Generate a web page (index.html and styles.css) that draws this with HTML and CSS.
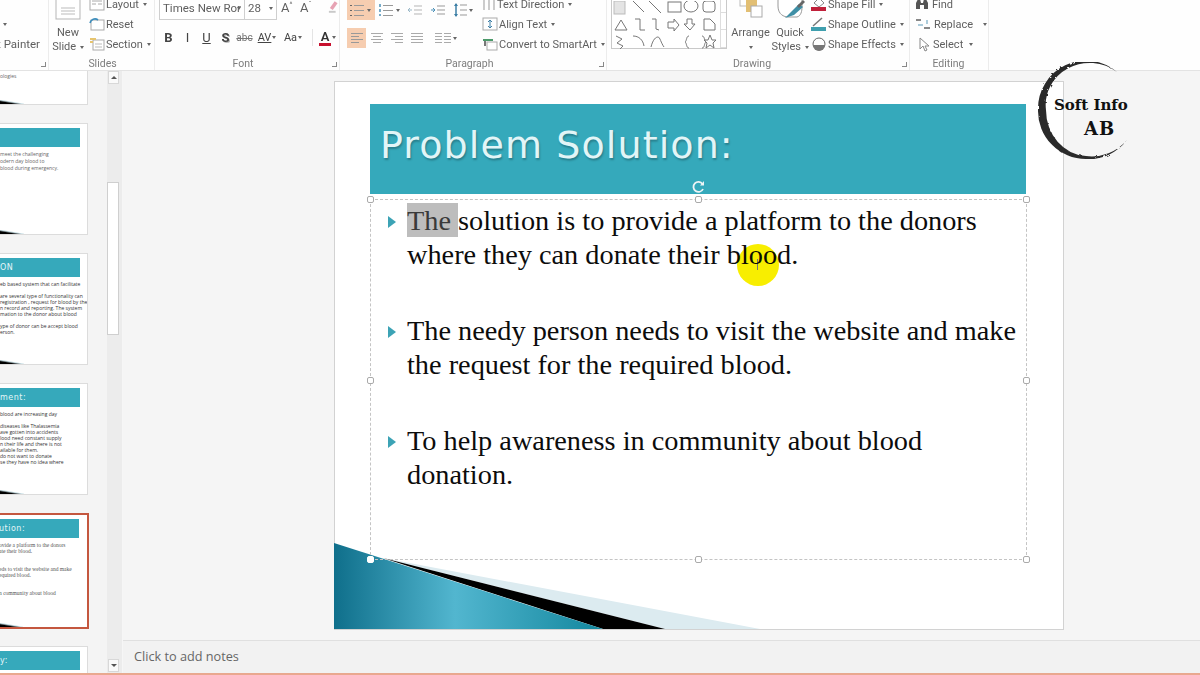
FILE: index.html
```html
<!DOCTYPE html>
<html lang="en">
<head>
    <meta charset="UTF-8">
    <title>Problem Solution - PowerPoint</title>
    <link rel="stylesheet" href="styles.css">
</head>
<body>
<!-- Ribbon -->
<header class="ribbon">
    <section class="group group-clipboard">
        <div class="group-body rows">
            <div class="row"></div>
            <div class="row"><span class="caret"></span></div>
            <div class="row painter">t Painter</div>
        </div>
        <div class="group-label"></div>
        <span class="expander"></span>
    </section>

    <section class="group group-slides">
        <div class="group-body slides-body">
            <div class="big-btn new-slide">
                <svg class="big-icon" width="26" height="26" viewBox="0 0 26 26"><rect x="1" y="1" width="24" height="24" fill="#fff" stroke="#b5b5b5"/><path d="M6 14h14M6 17h14M6 20h14" stroke="#bbb"/></svg>
                <span>New</span>
                <span>Slide <i class="caret"></i></span>
            </div>
            <div class="rows">
                <div class="row"><svg width="16" height="14" viewBox="0 0 16 14"><rect x="1" y="1" width="14" height="12" fill="#fff" stroke="#aaa"/><path d="M3 4h10M3 7h4M9 7h4" stroke="#aaa"/></svg>Layout <i class="caret"></i></div>
                <div class="row"><svg width="16" height="14" viewBox="0 0 16 14"><rect x="2" y="3" width="13" height="10" fill="#fff" stroke="#aaa"/><path d="M1 6a5 5 0 0 1 8-3" fill="none" stroke="#3c8dbc" stroke-width="1.6"/></svg>Reset</div>
                <div class="row"><svg width="16" height="14" viewBox="0 0 16 14"><rect x="4" y="3" width="11" height="10" fill="#fff" stroke="#aaa"/><path d="M1 2h6M1 5h3" stroke="#e6c46e" stroke-width="2"/><path d="M6 7h7M6 10h7" stroke="#bbb"/></svg>Section <i class="caret"></i></div>
            </div>
        </div>
        <div class="group-label">Slides</div>
    </section>

    <section class="group group-font">
        <div class="group-body font-body">
            <div class="font-top">
                <div class="combo combo-name">Times New Ror<i class="caret"></i></div>
                <div class="combo combo-size">28<i class="caret"></i></div>
                <span class="grow-btn">A<sup>^</sup></span>
                <span class="grow-btn">A<sup>ˇ</sup></span>
                <svg class="clear-btn" width="14" height="16" viewBox="0 0 14 16"><path d="M4 9l5-7 3 2-5 7z" fill="#e7a3b4"/><path d="M3 13h7" stroke="#c9c9c9" stroke-width="2"/></svg>
            </div>
            <div class="font-bottom">
                <b class="fmt">B</b>
                <i class="fmt fmt-i">I</i>
                <u class="fmt fmt-u">U</u>
                <span class="fmt fmt-s">S</span>
                <s class="fmt fmt-abc">abc</s>
                <span class="fmt fmt-av"><u>AV</u><i class="caret"></i></span>
                <span class="fmt fmt-aa">Aa<i class="caret"></i></span>
                <span class="fmt fmt-color"><span class="color-a">A</span><i class="caret"></i></span>
            </div>
        </div>
        <div class="group-label">Font</div>
        <span class="expander"></span>
    </section>

    <section class="group group-paragraph">
        <div class="group-body para-body">
            <div class="para-left">
                <div class="para-top">
                    <span class="tool tool-on tool-bullets">
                        <svg width="16" height="14" viewBox="0 0 16 14"><path d="M2 2v1M2 7v1M2 12v1" stroke="#666" stroke-width="2"/><path d="M5 2.500h10M5 7.500h10M5 12.500h10" stroke="#999"/></svg><i class="caret"></i>
                    </span>
                    <span class="tool">
                        <svg width="16" height="14" viewBox="0 0 16 14"><path d="M2 1v3M2 6v3M2 11v2" stroke="#4a90b8" stroke-width="1.500"/><path d="M5 2.500h10M5 7.500h10M5 12.500h10" stroke="#999"/></svg><i class="caret"></i>
                    </span>
                    <span class="tool tool-gap">
                        <svg width="16" height="12" viewBox="0 0 16 12"><path d="M7 2h8M7 6h8M7 10h8" stroke="#b5b5b5"/><path d="M5 6H1M3 4L1 6l2 2" fill="none" stroke="#9ab8c8"/></svg>
                    </span>
                    <span class="tool">
                        <svg width="16" height="12" viewBox="0 0 16 12"><path d="M7 2h8M7 6h8M7 10h8" stroke="#999"/><path d="M1 6h4M3 4l2 2-2 2" fill="none" stroke="#4a90b8"/></svg>
                    </span>
                    <span class="tool tool-gap">
                        <svg width="14" height="16" viewBox="0 0 14 16"><path d="M3 2v12" stroke="#3d7fa6" stroke-width="1.500"/><path d="M1 4l2-3 2 3M1 12l2 3 2-3" fill="#3d7fa6"/><path d="M7 3h7M7 8h7M7 13h7" stroke="#999"/></svg><i class="caret"></i>
                    </span>
                </div>
                <div class="para-bottom">
                    <span class="tool tool-on tool-align">
                        <svg width="12" height="12" viewBox="0 0 12 12"><path d="M0 1.500h12M0 4.500h8M0 7.500h12M0 10.500h8" stroke="#999"/></svg>
                    </span>
                    <span class="tool tool-align">
                        <svg width="12" height="12" viewBox="0 0 12 12"><path d="M0 1.500h12M2 4.500h8M0 7.500h12M2 10.500h8" stroke="#aaa"/></svg>
                    </span>
                    <span class="tool tool-align">
                        <svg width="12" height="12" viewBox="0 0 12 12"><path d="M0 1.500h12M4 4.500h8M0 7.500h12M4 10.500h8" stroke="#aaa"/></svg>
                    </span>
                    <span class="tool tool-align">
                        <svg width="12" height="12" viewBox="0 0 12 12"><path d="M0 1.500h12M0 4.500h12M0 7.500h12M0 10.500h12" stroke="#aaa"/></svg>
                    </span>
                    <span class="tool tool-cols">
                        <svg width="16" height="12" viewBox="0 0 16 12"><path d="M0 1.500h7M9 1.500h7M0 4.500h7M9 4.500h7M0 7.500h7M9 7.500h7M0 10.500h7M9 10.500h7" stroke="#aaa"/></svg><i class="caret"></i>
                    </span>
                </div>
            </div>
            <div class="rows">
                <div class="row"><svg width="14" height="14" viewBox="0 0 14 14"><path d="M2 1v12M7 1v12M12 1v12" stroke="#999"/></svg>Text Direction <i class="caret"></i></div>
                <div class="row"><svg width="16" height="14" viewBox="0 0 16 14"><rect x="1" y="1" width="14" height="12" fill="#fff" stroke="#aaa"/><path d="M8 3v8M6 5l2-2 2 2M6 9l2 2 2-2" fill="none" stroke="#3d7fa6"/></svg>Align Text <i class="caret"></i></div>
                <div class="row"><svg width="16" height="14" viewBox="0 0 16 14"><rect x="5" y="5" width="10" height="8" fill="#fff" stroke="#aaa"/><path d="M1 3h10" stroke="#4c9a6a" stroke-width="2"/><path d="M3 4v5" stroke="#777" stroke-width="2"/></svg>Convert to SmartArt <i class="caret"></i></div>
            </div>
        </div>
        <div class="group-label">Paragraph</div>
        <span class="expander"></span>
    </section>

    <section class="group group-drawing">
        <div class="group-body drawing-body">
            <div class="gallery">
                <svg width="108" height="56" viewBox="0 0 108 56" fill="none" stroke="#777">
                    <rect x="2" y="0" width="11" height="13" fill="#e4e4e4" stroke="#bbb"/>
                    <path d="M21 0l11 11M37 0l12 12"/>
                    <rect x="56" y="1" width="13" height="10"/>
                    <ellipse cx="79" cy="5" rx="7" ry="6"/>
                    <rect x="91" y="0" width="12" height="11" rx="3"/>
                    <path d="M3 29l6-10 6 10zM23 18h5v11h5M40 18h4v10l3 1"/>
                    <path d="M56 21h6v-3l5 6-5 6v-3h-6zM75 18h5v5h3l-5 6-6-6h3zM92 18h6l5 5v6H92z"/>
                    <path d="M4 35l6 3-5 4 6 3-3 3M21 35c6 0 10 4 11 10M39 46c2-8 5-10 7-10s3 6 6 10"/>
                    <path d="M77 35c-3 0-2 5-4 6 2 1 1 6 4 6M90 35c3 0 2 5 4 6-2 1-1 6-4 6"/>
                    <path d="M98 34l2 5 4 0-3 3 1 5-4-3-4 3 1-5-3-3 4 0z"/>
                </svg>
                <div class="gallery-scroll"><i></i><i></i><i></i></div>
            </div>
            <div class="big-btn arrange">
                <svg class="big-icon" width="30" height="26" viewBox="0 0 30 26"><rect x="4" y="0" width="12" height="12" fill="#fff" stroke="#bbb"/><rect x="10" y="6" width="11" height="12" fill="#e2bf74"/><rect x="15" y="12" width="11" height="11" fill="#fff" stroke="#aaa"/></svg>
                <span>Arrange</span>
                <i class="caret caret-low"></i>
            </div>
            <div class="big-btn quick">
                <svg class="big-icon" width="30" height="26" viewBox="0 0 30 26"><path d="M3 0v12c0 6 3 10 9 11h10c4-1 5-6 5-10V0" fill="#fff" stroke="#999"/><path d="M10 24l5-5 9-9 4 3-9 8z" fill="#3f8fa6"/><path d="M22 12l6-6 2 2-6 6z" fill="#666"/></svg>
                <span>Quick</span>
                <span>Styles <i class="caret"></i></span>
            </div>
            <div class="rows">
                <div class="row"><svg width="16" height="14" viewBox="0 0 16 14"><path d="M3 6l5-5 5 5-5 4z" fill="#fff" stroke="#888"/><rect x="0" y="10" width="15" height="4" fill="#c0203a"/></svg>Shape Fill <i class="caret"></i></div>
                <div class="row"><svg width="16" height="14" viewBox="0 0 16 14"><path d="M2 9l9-8" stroke="#777" stroke-width="1.500"/><rect x="0" y="10" width="15" height="4" fill="#3f9fae"/></svg>Shape Outline <i class="caret"></i></div>
                <div class="row"><svg width="16" height="14" viewBox="0 0 16 14"><circle cx="8" cy="7" r="6" fill="#fff" stroke="#666"/><path d="M2 8a6 6 0 0 0 12 0z" fill="#777"/></svg>Shape Effects <i class="caret"></i></div>
            </div>
        </div>
        <div class="group-label">Drawing</div>
        <span class="expander"></span>
    </section>

    <section class="group group-editing">
        <div class="group-body rows">
            <div class="row"><svg width="14" height="12" viewBox="0 0 14 12"><path d="M1 11V5l2-4h2l1 4h2l1-4h2l2 4v6H9V7H5v4z" fill="#555"/></svg>Find</div>
            <div class="row"><svg width="16" height="14" viewBox="0 0 16 14"><path d="M1 3h5M9 11h6" stroke="#888" stroke-width="2"/><path d="M3 8h5M12 3v4" stroke="#5a9ab8"/></svg>Replace <i class="caret caret-far"></i></div>
            <div class="row row-select"><svg width="12" height="15" viewBox="0 0 12 15"><path d="M2 1v11l3-3 2 5 2-1-2-4h4z" fill="#fff" stroke="#888"/></svg>Select <i class="caret"></i></div>
        </div>
        <div class="group-label">Editing</div>
    </section>
</header>

<div class="workspace">
    <!-- Slide thumbnails -->
    <aside class="thumbs">
        <div class="thumb thumb-first">
            <p class="thumb-text thumb-grey">ologies</p>
            <div class="thumb-corner"></div>
        </div>
        <div class="thumb">
            <div class="thumb-title"></div>
            <p class="thumb-text thumb-grey">meet the challenging<br>odern day blood to<br>blood during emergency.</p>
            <div class="thumb-corner"></div>
        </div>
        <div class="thumb">
            <div class="thumb-title">ON</div>
            <p class="thumb-text">eb based system that can facilitate<br><br>are several type of functionality can<br>registration , request for blood by the<br>n record and reporting. The system<br>mation to the donor about blood<br><br>ype of donor can be accept blood<br>erson.</p>
            <div class="thumb-corner"></div>
        </div>
        <div class="thumb">
            <div class="thumb-title">ment:</div>
            <p class="thumb-text">blood are increasing day<br><br>diseases like Thalassemia<br>ave gotten into accidents<br>lood need constant supply<br>n their life and there is not<br>ailable for them.<br>do not want to donate<br>se they have no idea where</p>
            <div class="thumb-corner"></div>
        </div>
        <div class="thumb thumb-active">
            <div class="thumb-title">ution:</div>
            <p class="thumb-text thumb-serif">ovide a platform to the donors<br>ate their blood.<br><br><br>eds to visit the website and make<br>equired blood.<br><br><br>n community about blood</p>
            <div class="thumb-corner"></div>
        </div>
        <div class="thumb">
            <div class="thumb-title">y:</div>
            <p class="thumb-text">ty of this project is fully</p>
        </div>
    </aside>

    <div class="scrollbar">
        <span class="scroll-btn"><i class="scroll-up"></i></span>
        <span class="scroll-thumb"></span>
        <span class="scroll-btn scroll-btn-down"><i class="scroll-down"></i></span>
    </div>

    <main class="editor">
        <div class="canvas">
            <div class="slide">
                <svg class="slide-corner" width="430" height="86" viewBox="0 0 430 86">
                    <defs>
                        <linearGradient id="tealGrad" x1="0" y1="0" x2="1" y2="0">
                            <stop offset="0" stop-color="#0f6f8b"/>
                            <stop offset="0.45" stop-color="#52b6cf"/>
                            <stop offset="1" stop-color="#13879e"/>
                        </linearGradient>
                    </defs>
                    <path d="M49 15L426 86H331z" fill="#dcebf0"/>
                    <path d="M49 15L269 86H331z" fill="#000"/>
                    <path d="M0 0V86H269z" fill="url(#tealGrad)"/>
                </svg>

                <h1 class="slide-title">Problem Solution:</h1>

                <div class="text-box">
                    <span class="rotate-handle">
                        <svg width="14" height="14" viewBox="0 0 14 14"><path d="M11 9a5 5 0 1 1-.500-5" fill="none" stroke="#eef4f5" stroke-width="1.800"/><path d="M12 1v4.500H8z" fill="#eef4f5"/></svg>
                    </span>
                    <span class="handle h-tl"></span><span class="handle h-tc"></span><span class="handle h-tr"></span>
                    <span class="handle h-ml"></span><span class="handle h-mr"></span>
                    <span class="handle h-bl"></span><span class="handle h-bc"></span><span class="handle h-br"></span>

                    <ul class="bullets">
                        <li><span class="selected">The </span>solution is to provide a platform to the donors where they can donate their blood.</li>
                        <li>The needy person needs to visit the website and make the request for the required blood.</li>
                        <li>To help awareness in community about blood donation.</li>
                    </ul>
                </div>

                <div class="pointer-dot"><span class="ibeam"></span></div>
            </div>
        </div>
        <div class="notes">Click to add notes</div>
    </main>
</div>
<div class="status-line"></div>

<!-- Channel logo -->
<div class="logo">
    <svg width="96" height="104" viewBox="0 0 96 104">
        <defs>
            <filter id="rough" x="-5%" y="-5%" width="110%" height="110%">
                <feTurbulence type="fractalNoise" baseFrequency="0.25" numOctaves="2" seed="4"/>
                <feDisplacementMap in="SourceGraphic" scale="2.500"/>
            </filter>
        </defs>
        <path filter="url(#rough)" d="M79 10A48 48 0 0 0 0 48A48 48 0 0 0 48 97A48 48 0 0 0 89 78A46 46 0 0 1 48 94A42 46 0 0 1 8 48A44 42 0 0 1 79 10z" fill="#2b2b2b"/>
    </svg>
    <div class="logo-text">Soft Info<br><span class="logo-ab">AB</span></div>
</div>
</body>
</html>
```

FILE: styles.css
```css
* {
    margin: 0;
    padding: 0;
    box-sizing: border-box;
}

html, body {
    width: 1200px;
    height: 675px;
    overflow: hidden;
}

body {
    font-family: Roboto, 'Open Sans', sans-serif;
    background: #f3f3f3;
    color: #5f5f5f;
    position: relative;
}

i {
    font-style: normal;
}

/* Ribbon */
.ribbon {
    display: flex;
    height: 71px;
    background: #fefefe;
    border-bottom: 1px solid #e3e3e3;
    overflow: hidden;
    font-size: 11px;
    filter: blur(0.4px);
}

.group {
    position: relative;
    height: 70px;
    border-right: 1px solid #ececec;
    display: flex;
    flex-direction: column;
    flex-shrink: 0;
}

.group-body {
    height: 62px;
    margin-top: -6px;
    flex-shrink: 0;
}

.group-label {
    text-align: center;
    color: #7d7d7d;
    font-size: 10.500px;
    line-height: 16px;
}

.group-slides .group-label { padding-left: 2px; }
.group-font .group-label { padding-right: 12px; }
.group-paragraph .group-label { padding-right: 14px; }
.group-drawing .group-label { padding-right: 16px; }
.group-editing .group-label { padding-right: 6px; }

.expander {
    position: absolute;
    right: 2px;
    bottom: 3px;
    width: 5px;
    height: 5px;
    border-right: 1px solid #888;
    border-bottom: 1px solid #888;
}

.caret {
    display: inline-block;
    width: 0;
    height: 0;
    vertical-align: middle;
    border-left: 2.500px solid transparent;
    border-right: 2.500px solid transparent;
    border-top: 3px solid #666;
    margin-left: 1px;
}

.rows {
    display: flex;
    flex-direction: column;
}

.row {
    height: 20px;
    display: flex;
    align-items: center;
    gap: 1px;
    white-space: nowrap;
}

.row .caret {
    margin-left: 3px;
}

.big-btn {
    display: flex;
    flex-direction: column;
    align-items: center;
    line-height: 14px;
    white-space: nowrap;
}

.big-icon {
    margin-bottom: 6px;
    flex-shrink: 0;
}

.caret-low {
    margin: 6px 0 0;
}

.group-clipboard {
    width: 49px;
}

.group-clipboard .caret {
    margin-left: 3px;
}

.painter {
    justify-content: flex-end;
    padding-right: 8px;
    font-size: 11.500px;
}

.group-slides {
    width: 106px;
}

.slides-body {
    display: flex;
    padding-left: 3px;
    gap: 5px;
}

.new-slide {
    width: 32px;
}

.group-font {
    width: 185px;
    padding-left: 4px;
}

.font-top {
    display: flex;
    align-items: center;
    height: 26px;
}

.combo {
    position: relative;
    height: 26px;
    border: 1px solid #cfcfcf;
    padding: 6px 3px 0;
    font-size: 11.500px;
    background: #fff;
    white-space: nowrap;
}

.combo .caret {
    position: absolute;
    right: 3px;
    top: 12px;
}

.combo-name {
    width: 87px;
}

.combo-size {
    width: 33px;
    border-left: 0;
}

.grow-btn {
    font-size: 13px;
    width: 20px;
    text-align: center;
}

.grow-btn sup {
    font-size: 7px;
    line-height: 0;
}

.clear-btn {
    margin-left: 10px;
}

.font-bottom {
    display: flex;
    align-items: center;
    height: 22px;
    margin-top: 6px;
    color: #444;
}

.fmt {
    display: block;
    font-size: 13px;
    width: 19px;
    text-align: center;
    flex-shrink: 0;
}

.fmt-s {
    font-weight: 700;
    text-shadow: 1px 1px 0 #bbb;
}

.fmt-abc {
    font-size: 10px;
    color: #777;
}

.fmt-av {
    width: 26px;
    font-size: 11px;
}

.fmt-aa {
    width: 26px;
    font-size: 11px;
}

.fmt-color {
    width: 28px;
    margin-left: 6px;
    padding-left: 2px;
    border-left: 1px solid #e4e4e4;
    color: #333;
}

.color-a {
    display: inline-block;
    font-weight: 600;
    border-bottom: 3px solid #c8102e;
    line-height: 12px;
    padding: 0 2px;
}

.group-paragraph {
    width: 267px;
    padding-left: 7px;
}

.para-body {
    display: flex;
}

.para-left {
    width: 135px;
    flex-shrink: 0;
    padding-top: 6px;
}

.para-top, .para-bottom {
    display: flex;
    align-items: center;
    height: 20px;
}

.para-bottom {
    margin-top: 8px;
}

.tool {
    display: flex;
    align-items: center;
    gap: 1px;
    height: 20px;
}

.tool-on {
    background: #f6cdb0;
}

.tool-bullets {
    width: 28px;
    padding-left: 2px;
    margin-right: 3px;
}

.tool-gap {
    margin-left: 7px;
}

.para-top .tool + .tool-gap + .tool {
    margin-left: 7px;
}

.tool-align {
    width: 19px;
    justify-content: center;
    margin-right: 1px;
}

.tool-cols {
    margin-left: 8px;
}

.group-drawing {
    width: 303px;
    padding-left: 4px;
}

.drawing-body {
    display: flex;
}

.gallery {
    display: flex;
    width: 116px;
    height: 55px;
    border: 1px solid #c9c9c9;
    flex-shrink: 0;
    padding-top: 6px;
    background: #fff;
}

.gallery svg {
    flex-shrink: 0;
    overflow: hidden;
}

.gallery-scroll {
    display: flex;
    flex-direction: column;
    width: 7px;
    margin-top: -6px;
    border-left: 1px solid #ddd;
}

.gallery-scroll i {
    flex: 1;
    border-bottom: 1px solid #ddd;
}

.arrange {
    width: 41px;
    margin-left: 3px;
}

.quick {
    width: 38px;
}

.quick + .rows {
    margin-left: 2px;
}

.group-editing {
    width: 79px;
    padding-left: 5px;
}

.group-editing .row {
    gap: 3px;
}

.caret-far {
    margin-left: 7px !important;
}

.row-select {
    padding-left: 3px;
}

/* Main area */
.workspace {
    display: flex;
    height: 602px;
}

.status-line {
    height: 2px;
    background: #e9a88f;
}

.thumbs {
    width: 107px;
    flex-shrink: 0;
    overflow: hidden;
    background: #f4f4f4;
    display: flex;
    flex-direction: column;
    gap: 18px;
    align-items: flex-end;
    padding-right: 19px;
    font-family: 'Open Sans', sans-serif;
    filter: blur(0.4px);
}

.thumb {
    position: relative;
    width: 88px;
    height: 112px;
    flex-shrink: 0;
    background: #fff;
    border: 1px solid #dcdcdc;
    border-left: 0;
    overflow: hidden;
    padding-top: 4px;
}

.thumb-first {
    height: 34px;
    border-top: 0;
    padding-top: 0;
}

.thumb-active {
    height: 116px;
    margin-bottom: -1px;
    border: 2px solid #c4573f;
    border-left: 0;
    margin-right: -1px;
    width: 90px;
}

.thumb-title {
    width: 80px;
    height: 19px;
    background: #36a9bb;
    color: #e4f6f8;
    font-size: 8px;
    line-height: 19px;
    letter-spacing: 0.5px;
    font-family: 'DejaVu Sans', sans-serif;
}

.thumb-text {
    margin-top: 4px;
    font-size: 5px;
    line-height: 6px;
    color: #333;
    white-space: nowrap;
    overflow: hidden;
}

.thumb-first .thumb-text {
    margin-top: 0;
    padding-top: 2px;
}

.thumb-grey {
    color: #666;
    line-height: 7px;
}

.thumb-serif {
    font-family: 'Liberation Serif', serif;
    color: #555;
    font-size: 5.500px;
}

.thumb-corner {
    position: absolute;
    left: 0;
    bottom: 0;
    width: 24px;
    height: 4px;
    background: linear-gradient(to top right, #000 0, #000 30%, #cfe3e8 50%, transparent 60%);
}

.scrollbar {
    width: 16px;
    flex-shrink: 0;
    background: #ececec;
    display: flex;
    flex-direction: column;
    padding-right: 3px;
    border-right: 1px solid #f6f6f6;
}

.scroll-btn {
    height: 13px;
    margin-left: 1px;
    background: #fafafa;
    border: 1px solid #d8d8d8;
    display: flex;
    align-items: center;
    justify-content: center;
}

.scroll-btn-down {
    margin-top: auto;
    margin-bottom: 1px;
}

.scroll-up, .scroll-down {
    width: 0;
    height: 0;
    border-left: 3px solid transparent;
    border-right: 3px solid transparent;
}

.scroll-up {
    border-bottom: 3px solid #555;
}

.scroll-down {
    border-top: 3px solid #555;
}

.scroll-thumb {
    height: 153px;
    margin-top: 98px;
    background: #fff;
    border: 1px solid #cfcfcf;
}

.editor {
    flex: 1;
    display: flex;
    flex-direction: column;
    min-width: 0;
}

.canvas {
    height: 569px;
    padding: 10px 0 0 211px;
    background: #f5f5f5;
}

.notes {
    flex: 1;
    border-top: 1px solid #e0e0e0;
    padding: 6px 0 0 11px;
    font-family: 'Open Sans', sans-serif;
    font-size: 12.700px;
    color: #666;
    background: #f2f2f2;
}

/* Slide */
.slide {
    position: relative;
    width: 730px;
    height: 549px;
    background: #fff;
    border: 1px solid #d2d2d2;
    padding: 22px 0 0 35px;
}

.slide-corner {
    position: absolute;
    left: -1px;
    bottom: 0;
}

.slide-title {
    position: relative;
    width: 656px;
    height: 90px;
    background: #35a9bb;
    color: #e2f5f7;
    font-family: 'DejaVu Sans', sans-serif;
    font-size: 38px;
    font-weight: 400;
    line-height: 82px;
    padding-left: 10px;
    letter-spacing: 1.100px;
    text-shadow: 1px 2px 2px rgba(0, 0, 0, 0.25);
}

.text-box {
    position: relative;
    width: 657px;
    height: 361px;
    margin-top: 5px;
    border: 1px dashed #c4c4c4;
}

.bullets {
    list-style: none;
    padding: 4px 8px 0 36px;
    font-family: 'Liberation Serif', serif;
    font-size: 28.300px;
    line-height: 34px;
    color: #0c0c0c;
}

.bullets li {
    position: relative;
    margin-bottom: 42px;
}

.bullets li::before {
    content: '';
    position: absolute;
    left: -19px;
    top: 12px;
    border-top: 6px solid transparent;
    border-bottom: 6px solid transparent;
    border-left: 8px solid #3ca3b5;
}

.selected {
    background: #bdbdbd;
    color: #3a3a3a;
    padding: 2px 0 1px;
}

.handle {
    position: absolute;
    width: 7px;
    height: 7px;
    background: #fff;
    border: 1px solid #aaa;
    border-radius: 2px;
    z-index: 2;
}

.h-tl { left: -4px; top: -4px; }
.h-tc { left: 324px; top: -4px; }
.h-tr { right: -4px; top: -4px; }
.h-ml { left: -4px; top: 177px; }
.h-mr { right: -4px; top: 177px; }
.h-bl { left: -4px; bottom: -4px; border-color: #fff; }
.h-bc { left: 324px; bottom: -4px; }
.h-br { right: -4px; bottom: -4px; }

.rotate-handle {
    position: absolute;
    left: 321px;
    top: -20px;
    line-height: 0;
}

.pointer-dot {
    position: absolute;
    left: 402px;
    top: 162px;
    width: 42px;
    height: 42px;
    border-radius: 50%;
    background: #f8ee00;
    mix-blend-mode: multiply;
}

.ibeam {
    position: absolute;
    left: 20px;
    top: 15px;
    width: 1px;
    height: 11px;
    background: #777;
}

/* Logo */
.logo {
    position: absolute;
    left: 1038px;
    top: 62px;
    width: 96px;
    height: 104px;
}

.logo svg {
    position: absolute;
    left: 0;
    top: 0;
}

.logo-text {
    position: absolute;
    left: 16px;
    top: 31px;
    width: 80px;
    font-family: 'DejaVu Serif', 'Liberation Serif', serif;
    font-weight: 700;
    font-size: 15px;
    line-height: 24px;
    color: #111;
    white-space: nowrap;
}

.logo-ab {
    margin-left: 30px;
    font-size: 18px;
    letter-spacing: 1px;
}
```
